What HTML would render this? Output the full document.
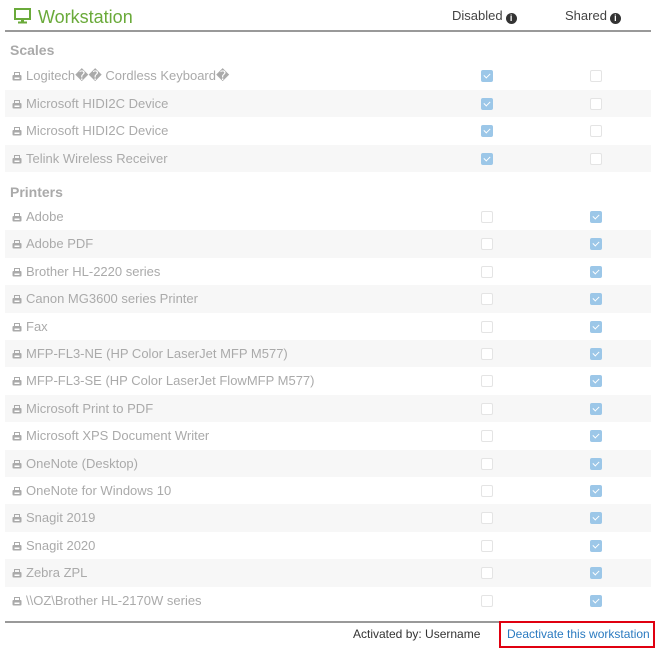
<!DOCTYPE html>
<html><head><meta charset="utf-8">
<style>
body{margin:0;width:660px;height:653px;background:#fff;font-family:"Liberation Sans",sans-serif;position:relative;overflow:hidden}
.a{position:absolute}
.title{left:38px;top:7px;font-size:18px;color:#6aaa3a}
.hl{left:5px;width:646px;height:2px;background:#999}
.col{font-size:13px;color:#444;top:8px}
.info{display:inline-block;width:11px;height:11px;border-radius:50%;background:#333;color:#fff;font-size:9px;line-height:11px;text-align:center;font-weight:bold;vertical-align:-1px;margin-left:3px}
.h{left:10px;font-size:14px;font-weight:bold;color:#aaa}
.row{left:5px;width:646px;height:27.4px}
.g{background:#f7f7f7}
.lbl{position:absolute;left:7px;top:6px;font-size:13px;color:#aaa;white-space:nowrap}
.pi{display:inline-block;width:10px;height:9px;vertical-align:-1px;margin-right:4px}
.cb{position:absolute;top:8px;width:10px;height:10px;border:1px solid #e4e4e4;border-radius:2px;background:#fff}
.ck{background:#9cc7e8;border-color:#9cc7e8}
.ck::after{content:"";position:absolute;left:3px;top:1px;width:3px;height:5px;border:solid #fff;border-width:0 1.5px 1.5px 0;transform:rotate(45deg)}
.d{left:476px}.s{left:585px}
</style></head><body>
<svg class="a" style="left:14px;top:8px" width="17" height="16" viewBox="0 0 17 16"><rect x="1" y="1" width="15" height="10" fill="none" stroke="#6aaa3a" stroke-width="2"/><rect x="7" y="11" width="3" height="3" fill="#6aaa3a"/><rect x="4" y="13.5" width="9" height="2" fill="#6aaa3a"/></svg>
<div class="a title">Workstation</div>
<div class="a col" style="left:452px">Disabled<span class="info">i</span></div>
<div class="a col" style="left:565px">Shared<span class="info">i</span></div>
<div class="a hl" style="top:30px"></div>
<div class="a h" style="top:42px">Scales</div>
<div class="a h" style="top:184px">Printers</div>
<div id="rows"></div>
<div class="a hl" style="top:621px;height:2px;background:#999"></div>
<div class="a" style="left:353px;top:627px;font-size:12px;color:#333">Activated by: Username</div>
<div class="a" style="left:499px;top:621px;width:152px;height:23px;border:2px solid #e00010"></div>
<div class="a" style="left:507px;top:627px;font-size:12px;color:#2a7ac0">Deactivate this workstation</div>
<!-- rows -->
<div class="a row" style="top:62px"><span class="lbl"><svg class="pi" viewBox="0 0 10 9"><rect x="2.5" y="0.5" width="5" height="3" fill="none" stroke="#aaa"/><rect x="0.5" y="3" width="9" height="5.5" rx="1" fill="#aaa"/><rect x="2.5" y="5.5" width="5" height="1.5" fill="#fff"/></svg>Logitech�&#xFFFD; Cordless Keyboard&#xFFFD;</span><span class="cb ck d"></span><span class="cb s"></span></div>
<div class="a row g" style="top:89.5px"><span class="lbl"><svg class="pi" viewBox="0 0 10 9"><rect x="2.5" y="0.5" width="5" height="3" fill="none" stroke="#aaa"/><rect x="0.5" y="3" width="9" height="5.5" rx="1" fill="#aaa"/><rect x="2.5" y="5.5" width="5" height="1.5" fill="#fff"/></svg>Microsoft HIDI2C Device</span><span class="cb ck d"></span><span class="cb s"></span></div>
<div class="a row" style="top:117px"><span class="lbl"><svg class="pi" viewBox="0 0 10 9"><rect x="2.5" y="0.5" width="5" height="3" fill="none" stroke="#aaa"/><rect x="0.5" y="3" width="9" height="5.5" rx="1" fill="#aaa"/><rect x="2.5" y="5.5" width="5" height="1.5" fill="#fff"/></svg>Microsoft HIDI2C Device</span><span class="cb ck d"></span><span class="cb s"></span></div>
<div class="a row g" style="top:144.5px"><span class="lbl"><svg class="pi" viewBox="0 0 10 9"><rect x="2.5" y="0.5" width="5" height="3" fill="none" stroke="#aaa"/><rect x="0.5" y="3" width="9" height="5.5" rx="1" fill="#aaa"/><rect x="2.5" y="5.5" width="5" height="1.5" fill="#fff"/></svg>Telink Wireless Receiver</span><span class="cb ck d"></span><span class="cb s"></span></div>

<div class="a row" style="top:203px"><span class="lbl"><svg class="pi" viewBox="0 0 10 9"><rect x="2.5" y="0.5" width="5" height="3" fill="none" stroke="#aaa"/><rect x="0.5" y="3" width="9" height="5.5" rx="1" fill="#aaa"/><rect x="2.5" y="5.5" width="5" height="1.5" fill="#fff"/></svg>Adobe</span><span class="cb d"></span><span class="cb ck s"></span></div>
<div class="a row g" style="top:230.4px"><span class="lbl"><svg class="pi" viewBox="0 0 10 9"><rect x="2.5" y="0.5" width="5" height="3" fill="none" stroke="#aaa"/><rect x="0.5" y="3" width="9" height="5.5" rx="1" fill="#aaa"/><rect x="2.5" y="5.5" width="5" height="1.5" fill="#fff"/></svg>Adobe PDF</span><span class="cb d"></span><span class="cb ck s"></span></div>
<div class="a row" style="top:257.8px"><span class="lbl"><svg class="pi" viewBox="0 0 10 9"><rect x="2.5" y="0.5" width="5" height="3" fill="none" stroke="#aaa"/><rect x="0.5" y="3" width="9" height="5.5" rx="1" fill="#aaa"/><rect x="2.5" y="5.5" width="5" height="1.5" fill="#fff"/></svg>Brother HL-2220 series</span><span class="cb d"></span><span class="cb ck s"></span></div>
<div class="a row g" style="top:285.2px"><span class="lbl"><svg class="pi" viewBox="0 0 10 9"><rect x="2.5" y="0.5" width="5" height="3" fill="none" stroke="#aaa"/><rect x="0.5" y="3" width="9" height="5.5" rx="1" fill="#aaa"/><rect x="2.5" y="5.5" width="5" height="1.5" fill="#fff"/></svg>Canon MG3600 series Printer</span><span class="cb d"></span><span class="cb ck s"></span></div>
<div class="a row" style="top:312.6px"><span class="lbl"><svg class="pi" viewBox="0 0 10 9"><rect x="2.5" y="0.5" width="5" height="3" fill="none" stroke="#aaa"/><rect x="0.5" y="3" width="9" height="5.5" rx="1" fill="#aaa"/><rect x="2.5" y="5.5" width="5" height="1.5" fill="#fff"/></svg>Fax</span><span class="cb d"></span><span class="cb ck s"></span></div>
<div class="a row g" style="top:340px"><span class="lbl"><svg class="pi" viewBox="0 0 10 9"><rect x="2.5" y="0.5" width="5" height="3" fill="none" stroke="#aaa"/><rect x="0.5" y="3" width="9" height="5.5" rx="1" fill="#aaa"/><rect x="2.5" y="5.5" width="5" height="1.5" fill="#fff"/></svg>MFP-FL3-NE (HP Color LaserJet MFP M577)</span><span class="cb d"></span><span class="cb ck s"></span></div>
<div class="a row" style="top:367.4px"><span class="lbl"><svg class="pi" viewBox="0 0 10 9"><rect x="2.5" y="0.5" width="5" height="3" fill="none" stroke="#aaa"/><rect x="0.5" y="3" width="9" height="5.5" rx="1" fill="#aaa"/><rect x="2.5" y="5.5" width="5" height="1.5" fill="#fff"/></svg>MFP-FL3-SE (HP Color LaserJet FlowMFP M577)</span><span class="cb d"></span><span class="cb ck s"></span></div>
<div class="a row g" style="top:394.8px"><span class="lbl"><svg class="pi" viewBox="0 0 10 9"><rect x="2.5" y="0.5" width="5" height="3" fill="none" stroke="#aaa"/><rect x="0.5" y="3" width="9" height="5.5" rx="1" fill="#aaa"/><rect x="2.5" y="5.5" width="5" height="1.5" fill="#fff"/></svg>Microsoft Print to PDF</span><span class="cb d"></span><span class="cb ck s"></span></div>
<div class="a row" style="top:422.2px"><span class="lbl"><svg class="pi" viewBox="0 0 10 9"><rect x="2.5" y="0.5" width="5" height="3" fill="none" stroke="#aaa"/><rect x="0.5" y="3" width="9" height="5.5" rx="1" fill="#aaa"/><rect x="2.5" y="5.5" width="5" height="1.5" fill="#fff"/></svg>Microsoft XPS Document Writer</span><span class="cb d"></span><span class="cb ck s"></span></div>
<div class="a row g" style="top:449.6px"><span class="lbl"><svg class="pi" viewBox="0 0 10 9"><rect x="2.5" y="0.5" width="5" height="3" fill="none" stroke="#aaa"/><rect x="0.5" y="3" width="9" height="5.5" rx="1" fill="#aaa"/><rect x="2.5" y="5.5" width="5" height="1.5" fill="#fff"/></svg>OneNote (Desktop)</span><span class="cb d"></span><span class="cb ck s"></span></div>
<div class="a row" style="top:477px"><span class="lbl"><svg class="pi" viewBox="0 0 10 9"><rect x="2.5" y="0.5" width="5" height="3" fill="none" stroke="#aaa"/><rect x="0.5" y="3" width="9" height="5.5" rx="1" fill="#aaa"/><rect x="2.5" y="5.5" width="5" height="1.5" fill="#fff"/></svg>OneNote for Windows 10</span><span class="cb d"></span><span class="cb ck s"></span></div>
<div class="a row g" style="top:504.4px"><span class="lbl"><svg class="pi" viewBox="0 0 10 9"><rect x="2.5" y="0.5" width="5" height="3" fill="none" stroke="#aaa"/><rect x="0.5" y="3" width="9" height="5.5" rx="1" fill="#aaa"/><rect x="2.5" y="5.5" width="5" height="1.5" fill="#fff"/></svg>Snagit 2019</span><span class="cb d"></span><span class="cb ck s"></span></div>
<div class="a row" style="top:531.8px"><span class="lbl"><svg class="pi" viewBox="0 0 10 9"><rect x="2.5" y="0.5" width="5" height="3" fill="none" stroke="#aaa"/><rect x="0.5" y="3" width="9" height="5.5" rx="1" fill="#aaa"/><rect x="2.5" y="5.5" width="5" height="1.5" fill="#fff"/></svg>Snagit 2020</span><span class="cb d"></span><span class="cb ck s"></span></div>
<div class="a row g" style="top:559.2px"><span class="lbl"><svg class="pi" viewBox="0 0 10 9"><rect x="2.5" y="0.5" width="5" height="3" fill="none" stroke="#aaa"/><rect x="0.5" y="3" width="9" height="5.5" rx="1" fill="#aaa"/><rect x="2.5" y="5.5" width="5" height="1.5" fill="#fff"/></svg>Zebra ZPL</span><span class="cb d"></span><span class="cb ck s"></span></div>
<div class="a row" style="top:586.6px"><span class="lbl"><svg class="pi" viewBox="0 0 10 9"><rect x="2.5" y="0.5" width="5" height="3" fill="none" stroke="#aaa"/><rect x="0.5" y="3" width="9" height="5.5" rx="1" fill="#aaa"/><rect x="2.5" y="5.5" width="5" height="1.5" fill="#fff"/></svg>\\OZ\Brother HL-2170W series</span><span class="cb d"></span><span class="cb ck s"></span></div>
</body></html>
